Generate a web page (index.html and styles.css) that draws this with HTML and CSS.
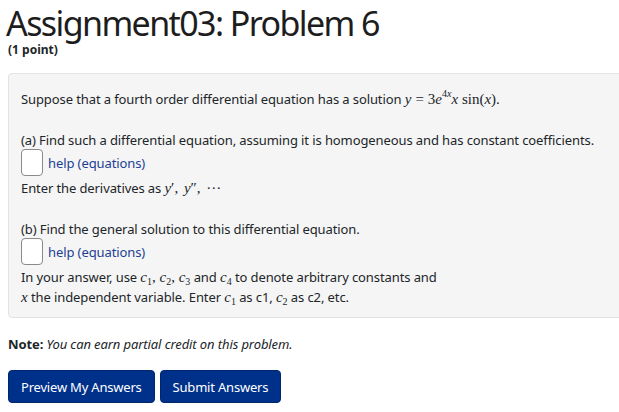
FILE: index.html
```html
<!DOCTYPE html>
<html>
<head>
<meta charset="utf-8">
<link rel="stylesheet" href="styles.css">
</head>
<body>
<div class="page">
  <h1 class="title">Assignment03: Problem 6</h1>
  <div class="points">(1 point)</div>
  <div class="panel">
    <p class="line first">Suppose that a fourth order differential equation has a solution <span class="math"><i>y</i><span class="op">=</span>3<i>e</i><sup><span class="supn">4</span><i>x</i></sup><i>x</i> sin(<i>x</i>).</span></p>
    <p class="line gap">(a) Find such a differential equation, assuming it is homogeneous and has constant coefficients.</p>
    <div class="answer"><span class="box"></span><a class="help">help (equations)</a></div>
    <p class="line">Enter the derivatives as <span class="math"><i>y</i>&prime;<span class="comma">,</span> <i>y</i>&Prime;<span class="comma">,</span> &middot;&middot;&middot;</span></p>
    <p class="line gap">(b) Find the general solution to this differential equation.</p>
    <div class="answer"><span class="box"></span><a class="help">help (equations)</a></div>
    <p class="line">In your answer, use <span class="math"><i>c</i><sub>1</sub>, <i>c</i><sub>2</sub>, <i>c</i><sub>3</sub></span> and <span class="math"><i>c</i><sub>4</sub></span> to denote arbitrary constants and</p>
    <p class="line"><span class="math"><i>x</i></span> the independent variable. Enter <span class="math"><i>c</i><sub>1</sub></span> as c1, <span class="math"><i>c</i><sub>2</sub></span> as c2, etc.</p>
  </div>
  <p class="note"><b>Note:</b> <i>You can earn partial credit on this problem.</i></p>
  <div class="buttons">
    <button class="btn">Preview My Answers</button>
    <button class="btn">Submit Answers</button>
  </div>
</div>
</body>
</html>
```
FILE: styles.css
```css
html, body {
  margin: 0;
  padding: 0;
  background: #ffffff;
  overflow: hidden;
}
body {
  font-family: "Noto Sans", "Open Sans", sans-serif;
  color: #212529;
  width: 619px;
  height: 412px;
}
.page {
  padding: 0 0 0 8px;
}
.title {
  font-family: "Noto Sans", sans-serif;
  font-weight: 400;
  font-size: 34px;
  line-height: 44px;
  margin: 0 0 0 -2px;
  padding-top: 1px;
  letter-spacing: -1.6px;
  color: #1d1d1d;
}
.points {
  font-size: 12px;
  font-weight: 700;
  line-height: 14px;
  margin-top: -2px;
}
.panel {
  margin-top: 16px;
  width: 640px;
  background: #f5f5f5;
  border: 1px solid #e3e3e3;
  border-radius: 4px;
  padding: 12px 10px 10px 12px;
  box-sizing: border-box;
}
.line {
  margin: 0;
  font-size: 13px;
  line-height: 20px;
  letter-spacing: -0.1px;
}
.line.first {
  margin-top: 3px;
}
.line.gap {
  margin-top: 21px;
}
.math {
  font-family: "Liberation Serif", "DejaVu Serif", serif;
  font-size: 15px;
  letter-spacing: 0;
}
.math i {
  font-style: italic;
}
.math .op {
  margin: 0 4px;
}
.math sup {
  font-size: 10px;
  vertical-align: 7px;
  line-height: 0;
}
.math sup .supn {
  font-style: normal;
}
.math sub {
  font-size: 10px;
  vertical-align: -3px;
  line-height: 0;
}
.math .comma {
  margin-right: 2px;
}
.answer {
  display: flex;
  align-items: center;
  gap: 5px;
  height: 27px;
  margin: -1px 0 2px 0;
}
.box {
  display: inline-block;
  width: 20px;
  height: 25px;
  background: #ffffff;
  border: 1px solid #8a8a8a;
  border-radius: 4px;
}
.help {
  color: #1c3f94;
  font-size: 13px;
  letter-spacing: -0.1px;
}
.note {
  margin: 17px 0 0 0;
  font-size: 13px;
  line-height: 18px;
  letter-spacing: -0.1px;
}
.buttons {
  display: flex;
  gap: 5px;
  margin-top: 17px;
}
.btn {
  font-family: "Noto Sans", sans-serif;
  font-size: 13px;
  letter-spacing: -0.2px;
  color: #ffffff;
  background: #00318a;
  border: 1px solid #00266c;
  border-radius: 4px;
  height: 33px;
  padding: 0 12px;
}
```
